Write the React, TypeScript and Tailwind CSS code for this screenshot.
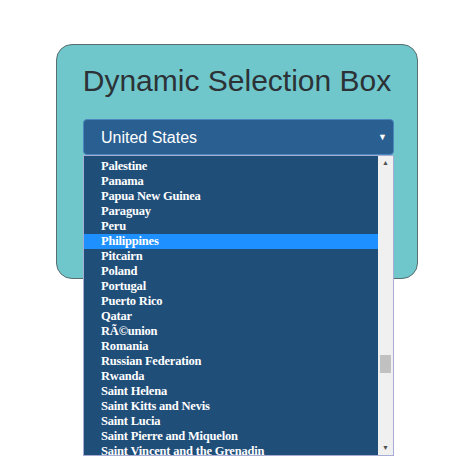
import React from "react";

const countries = [
  "Palestine",
  "Panama",
  "Papua New Guinea",
  "Paraguay",
  "Peru",
  "Philippines",
  "Pitcairn",
  "Poland",
  "Portugal",
  "Puerto Rico",
  "Qatar",
  "RÃ©union",
  "Romania",
  "Russian Federation",
  "Rwanda",
  "Saint Helena",
  "Saint Kitts and Nevis",
  "Saint Lucia",
  "Saint Pierre and Miquelon",
  "Saint Vincent and the Grenadin",
];

export default function App() {
  return (
    <div className="w-[474px] h-[474px] bg-white overflow-hidden pt-[44px] pl-[56px]">
      <div className="relative w-[362px] h-[235px] rounded-[16px] border border-[#5a6e70] bg-[#6fc7cc] px-[25px] pt-[16px]">
        <h1
          className="text-center text-[30px] leading-[40px] text-[#2c3236]"
          style={{ fontFamily: '"Liberation Sans", Arial, sans-serif' }}
        >
          Dynamic Selection Box
        </h1>
        <div className="relative mt-[18px] ml-[1px] w-[311px]">
          <div
            className="flex h-[36px] items-center justify-between rounded-[4px] border border-[#4b86bd] bg-[#2a5f91] pl-[17px] pr-[6px] text-[16px] text-white"
            style={{ fontFamily: '"Liberation Sans", Arial, sans-serif' }}
          >
            <span className="mt-[1px]">United States</span>
            <span className="text-[9px] leading-none">▼</span>
          </div>
          <div className="absolute left-0 top-[36px] z-10 flex h-[301px] w-[311px] border border-[#a7acd4] bg-[#1f4e79]">
            <div className="flex-1 overflow-hidden pt-[3px]">
              {countries.map((c) => (
                <div
                  key={c}
                  className={
                    "h-[15px] whitespace-nowrap pl-[17px] text-[12.5px] font-bold leading-[15px] text-white " +
                    (c === "Philippines" ? "bg-[#1e90ff]" : "")
                  }
                  style={{ fontFamily: '"Liberation Serif", "Times New Roman", serif', letterSpacing: "-0.2px" }}
                >
                  {c}
                </div>
              ))}
            </div>
            <div className="relative flex w-[15px] flex-col items-center bg-[#f0f0f0]">
              <span className="mt-[3px] text-[7px] leading-none text-[#505050]">▲</span>
              <div className="absolute left-[2px] top-[199px] h-[18px] w-[11px] bg-[#c1c1c1]" />
              <span className="mt-auto mb-[4px] text-[7px] leading-none text-[#505050]">▼</span>
            </div>
          </div>
        </div>
      </div>
    </div>
  );
}
